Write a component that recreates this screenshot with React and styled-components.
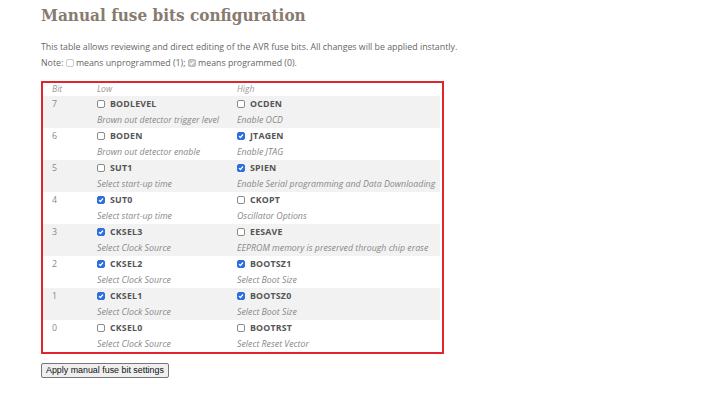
import React from "react";
import styled, { createGlobalStyle } from "styled-components";

const Global = createGlobalStyle`
  html, body { margin: 0; padding: 0; background: #fff; }
  body { font-family: "Open Sans", "Liberation Sans", sans-serif; }
`;

const Page = styled.div`
  padding: 4px 0 0 41px;
  width: 679px;
  box-sizing: border-box;
`;

const Title = styled.h1`
  margin: 0;
  font-family: "DejaVu Serif Condensed", "DejaVu Serif", "Liberation Serif", serif;
  font-weight: bold;
  font-size: 17px;
  line-height: 22px;
  color: #877b6f;
`;

const Para = styled.p`
  margin: 13px 0 0 0;
  font-size: 8.8px;
  line-height: 16px;
  color: #666;
`;

const Box = styled.span`
  display: inline-block;
  box-sizing: border-box;
  width: 8px;
  height: 8px;
  border-radius: 2px;
  vertical-align: -1px;
  border: 1px solid ${(p) => (p.$checked ? (p.$disabled ? "#bbb" : "#2a6fe0") : p.$disabled ? "#ccc" : "#8a8a8a")};
  background: ${(p) => (p.$checked ? (p.$disabled ? "#c8c8c8" : "#2a6fe0") : "#fff")};
  position: relative;
  margin-right: ${(p) => p.$gap || 0}px;
`;

const CheckMark = styled.svg`
  position: absolute;
  left: 0;
  top: 0;
  width: 6px;
  height: 6px;
`;

function Checkbox({ checked, disabled, gap }) {
  return (
    <Box $checked={checked} $disabled={disabled} $gap={gap}>
      {checked && (
        <CheckMark viewBox="0 0 6 6">
          <path d="M1 3.1 L2.4 4.5 L5 1.5" fill="none" stroke="#fff" strokeWidth="1.2" />
        </CheckMark>
      )}
    </Box>
  );
}

const Frame = styled.div`
  margin-top: 10px;
  width: 403px;
  box-sizing: border-box;
  border: 2px solid #e0262c;
  padding: 0 2px 0 0;
`;

const Table = styled.div`
  display: grid;
  grid-template-columns: 45px 141px 1fr;
`;

const Head = styled.div`
  height: 13px;
  line-height: 13px;
  font-size: 8.6px;
  font-style: italic;
  color: #999;
  padding-left: ${(p) => p.$pl || 0}px;
`;

const Cell = styled.div`
  height: 16px;
  line-height: 16px;
  font-size: 8.8px;
  background: ${(p) => (p.$shade ? "#f2f2f2" : "#fff")};
  padding-left: ${(p) => p.$pl || 0}px;
  white-space: nowrap;
  color: #888;
`;

const Name = styled.span`
  font-weight: bold;
  color: #555;
  font-size: 8.8px;
  letter-spacing: 0.2px;
`;

const Desc = styled.span`
  font-style: italic;
  color: #888;
  font-size: 8.8px;
`;

const Button = styled.button`
  margin-top: 9px;
  font-family: "Liberation Sans", Arial, sans-serif;
  font-size: 8.9px;
  color: #111;
  background: #efefef;
  border: 1px solid #777;
  border-radius: 2px;
  height: 15px;
  padding: 0 4px;
  line-height: 13px;
`;

const rows = [
  [7, false, "BODLEVEL", "Brown out detector trigger level", false, "OCDEN", "Enable OCD"],
  [6, false, "BODEN", "Brown out detector enable", true, "JTAGEN", "Enable JTAG"],
  [5, false, "SUT1", "Select start-up time", true, "SPIEN", "Enable Serial programming and Data Downloading"],
  [4, true, "SUT0", "Select start-up time", false, "CKOPT", "Oscillator Options"],
  [3, true, "CKSEL3", "Select Clock Source", false, "EESAVE", "EEPROM memory is preserved through chip erase"],
  [2, true, "CKSEL2", "Select Clock Source", true, "BOOTSZ1", "Select Boot Size"],
  [1, true, "CKSEL1", "Select Clock Source", true, "BOOTSZ0", "Select Boot Size"],
  [0, false, "CKSEL0", "Select Clock Source", false, "BOOTRST", "Select Reset Vector"],
];

export default function App() {
  return (
    <>
      <Global />
      <Page>
        <Title>Manual fuse bits configuration</Title>
        <Para>
          This table allows reviewing and direct editing of the AVR fuse bits. All changes will be applied instantly.
          <br />
          Note: <Checkbox disabled /> means unprogrammed (1); <Checkbox checked disabled /> means programmed (0).
        </Para>
        <Frame>
          <Table>
            <Head $pl={9}>Bit</Head>
            <Head $pl={9}>Low</Head>
            <Head $pl={8}>High</Head>
            {rows.map(([bit, lc, ln, ld, hc, hn, hd], i) => {
              const shade = i % 2 === 0;
              return (
                <React.Fragment key={bit}>
                  <Cell $shade={shade} $pl={9}>{bit}</Cell>
                  <Cell $shade={shade} $pl={9}>
                    <Checkbox checked={lc} gap={5} />
                    <Name>{ln}</Name>
                  </Cell>
                  <Cell $shade={shade} $pl={8}>
                    <Checkbox checked={hc} gap={5} />
                    <Name>{hn}</Name>
                  </Cell>
                  <Cell $shade={shade} />
                  <Cell $shade={shade} $pl={9}><Desc>{ld}</Desc></Cell>
                  <Cell $shade={shade} $pl={8}><Desc>{hd}</Desc></Cell>
                </React.Fragment>
              );
            })}
          </Table>
        </Frame>
        <Button>Apply manual fuse bit settings</Button>
      </Page>
    </>
  );
}
